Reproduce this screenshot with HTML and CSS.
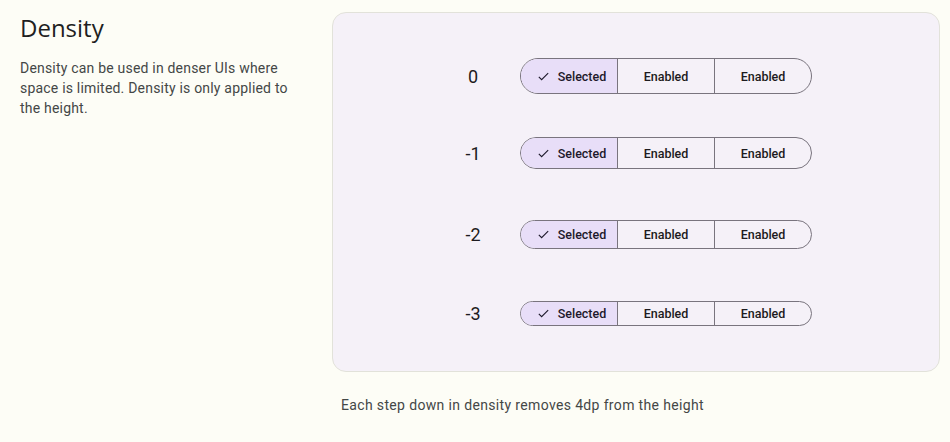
FILE: index.html
```html
<!DOCTYPE html>
<html lang="en">
<head>
<meta charset="utf-8">
<title>Density</title>
<link rel="stylesheet" href="styles.css">
</head>
<body>
<div class="page">
  <section class="intro">
    <h2 class="title">Density</h2>
    <p class="desc">Density can be used in denser UIs where space is limited. Density is only applied to the height.</p>
  </section>
  <section class="demo">
    <div class="card">
      <div class="row d0">
        <span class="label">0</span>
        <div class="seg">
          <button class="btn selected"><svg class="check" viewBox="0 0 24 24"><path d="M4.5 12.5l4.5 4.5 10.5-10.5"/></svg>Selected</button>
          <button class="btn">Enabled</button>
          <button class="btn">Enabled</button>
        </div>
      </div>
      <div class="row d1">
        <span class="label">-1</span>
        <div class="seg">
          <button class="btn selected"><svg class="check" viewBox="0 0 24 24"><path d="M4.5 12.5l4.5 4.5 10.5-10.5"/></svg>Selected</button>
          <button class="btn">Enabled</button>
          <button class="btn">Enabled</button>
        </div>
      </div>
      <div class="row d2">
        <span class="label">-2</span>
        <div class="seg">
          <button class="btn selected"><svg class="check" viewBox="0 0 24 24"><path d="M4.5 12.5l4.5 4.5 10.5-10.5"/></svg>Selected</button>
          <button class="btn">Enabled</button>
          <button class="btn">Enabled</button>
        </div>
      </div>
      <div class="row d3">
        <span class="label">-3</span>
        <div class="seg">
          <button class="btn selected"><svg class="check" viewBox="0 0 24 24"><path d="M4.5 12.5l4.5 4.5 10.5-10.5"/></svg>Selected</button>
          <button class="btn">Enabled</button>
          <button class="btn">Enabled</button>
        </div>
      </div>
    </div>
    <p class="caption">Each step down in density removes 4dp from the height</p>
  </section>
</div>
</body>
</html>
```

FILE: styles.css
```css
html, body {
  margin: 0;
  padding: 0;
  background: #fdfdf6;
}
body {
  font-family: Roboto, "Liberation Sans", sans-serif;
  color: #1d1b20;
}
.page {
  display: flex;
  padding: 12px 10px 0 20px;
}
.intro {
  width: 285px;
  flex: none;
}
.title {
  font-family: "Open Sans", Roboto, sans-serif;
  font-weight: 400;
  font-size: 24px;
  line-height: 32px;
  margin: 0;
  color: #1f1f1f;
}
.desc {
  margin: 14px 0 0;
  font-size: 14px;
  line-height: 20px;
  letter-spacing: 0.2px;
  color: #444746;
}
.demo {
  flex: 1;
  margin-left: 27px;
}
.card {
  height: 358px;
  border: 1px solid #e2e2da;
  border-radius: 14px;
  background: #f5f1f8;
  display: flex;
  flex-direction: column;
  justify-content: center;
  align-items: center;
}
.row {
  display: flex;
  align-items: center;
  gap: 34px;
}
.d1 { margin-top: 43px; }
.d2 { margin-top: 51px; }
.d3 { margin-top: 52px; }
.label {
  width: 26px;
  text-align: center;
  font-size: 18px;
  color: #1d1b20;
}
.seg {
  display: flex;
  border: 1px solid #79747e;
  border-radius: 999px;
  overflow: hidden;
  height: 34px;
}
.d1 .seg { height: 30px; }
.d2 .seg { height: 27px; }
.d3 .seg { height: 23px; }
.btn {
  width: 97px;
  border: 0;
  border-left: 1px solid #79747e;
  background: transparent;
  font-family: Roboto, "Liberation Sans", sans-serif;
  font-size: 12.5px;
  font-weight: 500;
  color: #1d1b20;
  padding: 0;
  display: flex;
  align-items: center;
  justify-content: center;
}
.btn:first-child {
  border-left: 0;
  width: 96px;
}
.selected {
  background: #e8def8;
  color: #1d192b;
  padding-left: 4px;
}
.check {
  width: 15px;
  height: 15px;
  margin-right: 7px;
  fill: none;
  stroke: #1d192b;
  stroke-width: 1.8;
}
.caption {
  margin: 23px 0 0 9px;
  font-size: 14px;
  line-height: 20px;
  letter-spacing: 0.35px;
  color: #444746;
}
```
